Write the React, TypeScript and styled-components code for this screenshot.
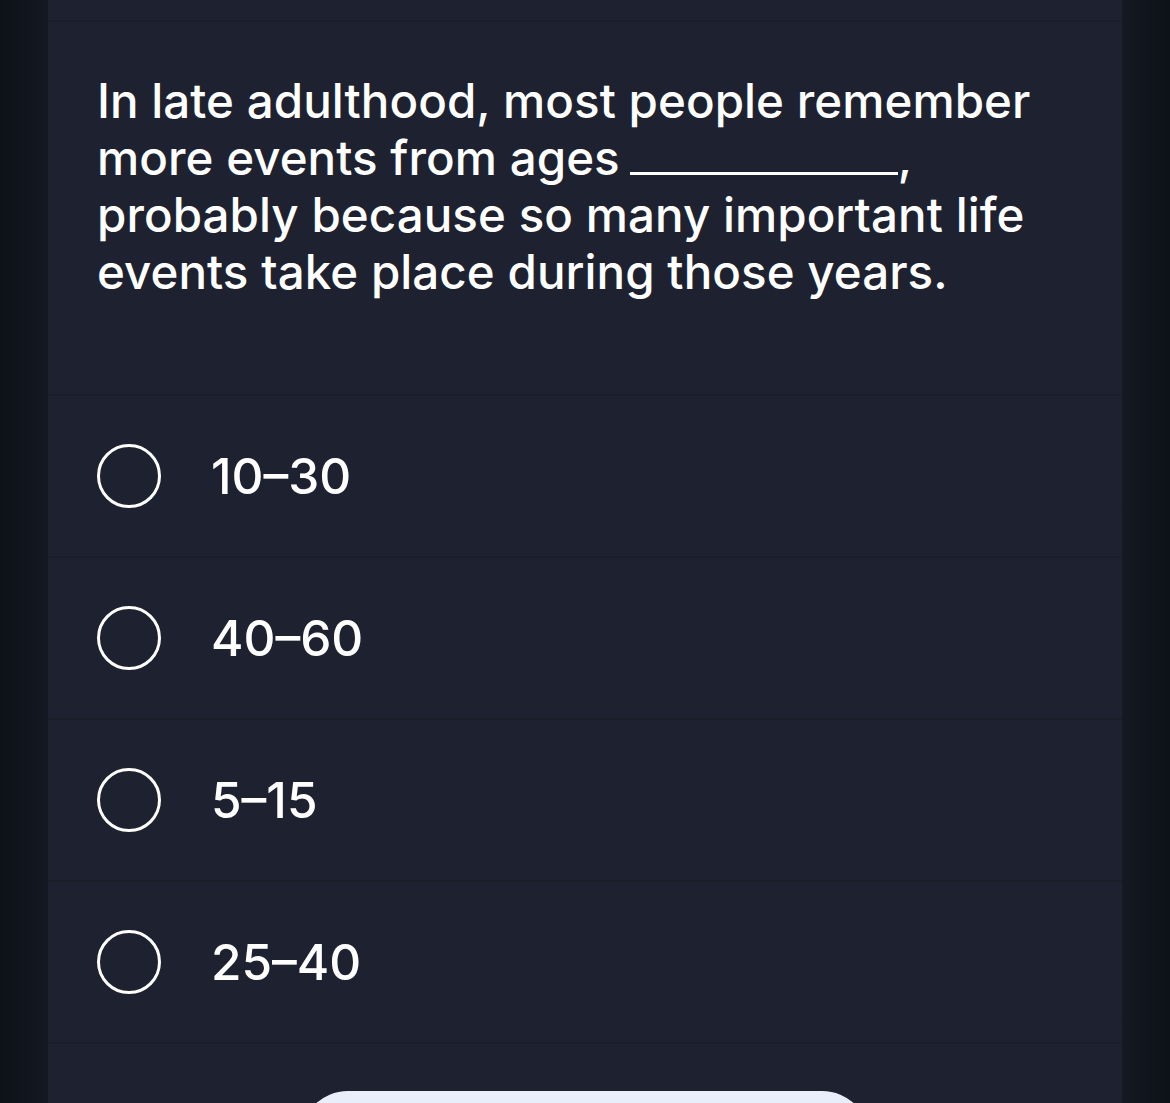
import React from 'react';
import styled, { createGlobalStyle } from 'styled-components';

const GlobalStyle = createGlobalStyle`
  html, body {
    margin: 0;
    padding: 0;
    height: 100%;
    overflow: hidden;
  }
  body {
    background: linear-gradient(
      to right,
      #0d1118 0px,
      #141922 48px,
      #1e2230 48px,
      #1e2230 1122px,
      #141922 1122px,
      #0d1118 1170px
    );
    font-family: Inter, "Liberation Sans", sans-serif;
    -webkit-font-smoothing: antialiased;
  }
`;

const Panel = styled.main`
  margin: 0 48px;
  min-height: 1103px;
  background: #1e2230;
  color: #ffffff;
  display: flex;
  flex-direction: column;
  & > * {
    flex-shrink: 0;
  }
`;

const TopStrip = styled.div`
  height: 20px;
  border-bottom: 2px solid #1a1e29;
`;

const Question = styled.h1`
  margin: 0;
  padding: 50px 49px 94px;
  font-size: 47.5px;
  font-weight: 550;
  line-height: 57px;
  letter-spacing: 0.05px;
  border-bottom: 2px solid #1a1e29;
`;

const Blank = styled.span`
  display: inline-block;
  width: 268px;
  border-bottom: 3px solid #ffffff;
  margin-left: 10px;
  vertical-align: baseline;
`;

const OptionList = styled.ul`
  list-style: none;
  margin: 0;
  padding: 0;
`;

const OptionRow = styled.li`
  height: 162px;
  box-sizing: border-box;
  display: flex;
  align-items: center;
  gap: 50px;
  padding: 0 49px;
  border-bottom: 2px solid #1a1e29;
`;

const Radio = styled.span`
  width: 64px;
  height: 64px;
  box-sizing: border-box;
  border: 3px solid #ffffff;
  border-radius: 50%;
  flex-shrink: 0;
`;

const OptionLabel = styled.span`
  font-size: 49.5px;
  font-weight: 550;
  letter-spacing: 0;
`;

const Footer = styled.div`
  display: flex;
  justify-content: center;
  padding-top: 47px;
`;

const SubmitButton = styled.button`
  width: 570px;
  height: 96px;
  border: none;
  border-radius: 48px;
  background: #e8effa;
  flex-shrink: 0;
`;

const options = ['10–30', '40–60', '5–15', '25–40'];

const App: React.FC = () => {
  return (
    <>
      <GlobalStyle />
      <Panel>
        <TopStrip />
        <Question>
          In late adulthood, most people remember
          <br />
          more events from ages
          <Blank />,
          <br />
          probably because so many important life
          <br />
          events take place during those years.
        </Question>
        <OptionList>
          {options.map((opt) => (
            <OptionRow key={opt}>
              <Radio />
              <OptionLabel>{opt}</OptionLabel>
            </OptionRow>
          ))}
        </OptionList>
        <Footer>
          <SubmitButton aria-label="Submit" />
        </Footer>
      </Panel>
    </>
  );
};

export default App;
